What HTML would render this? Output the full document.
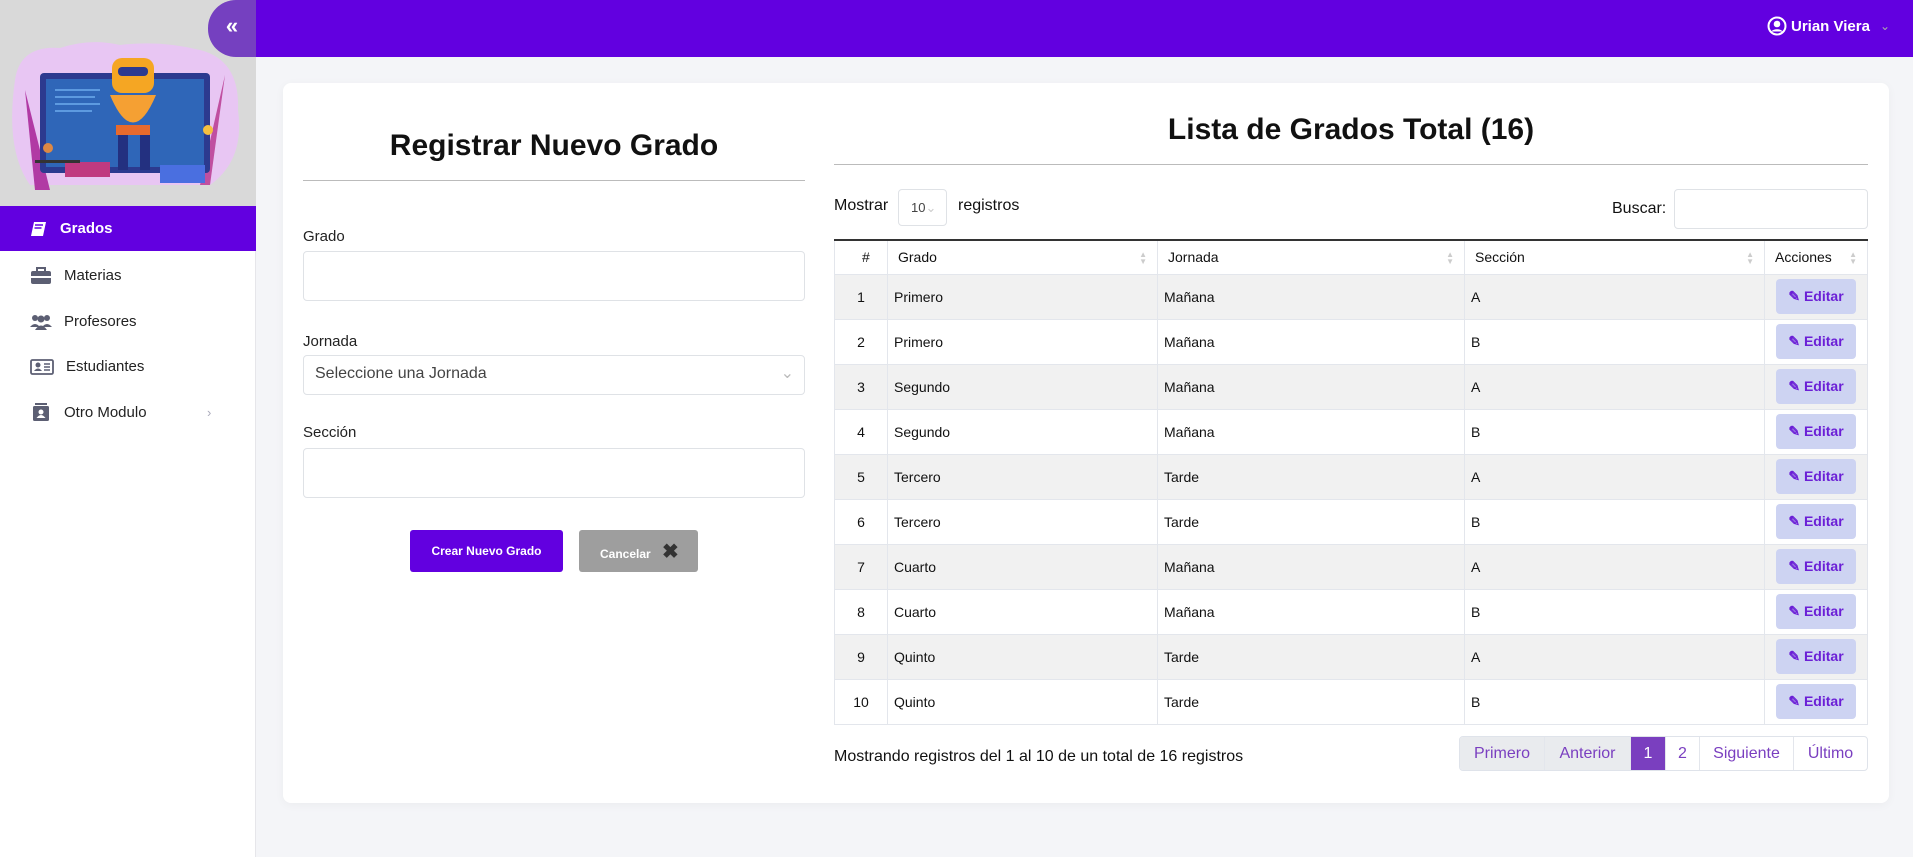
<!DOCTYPE html>
<html><head><meta charset="utf-8"><style>
*{box-sizing:border-box;margin:0;padding:0}
body{width:1913px;height:857px;background:#f4f5f8;font-family:"Liberation Sans",sans-serif;position:relative;overflow:hidden;color:#111}
.a{position:absolute}
.top{left:256px;top:0;width:1657px;height:57px;background:#6200e0}
.side{left:0;top:0;width:256px;height:857px;background:#fff;border-right:1px solid #e6e6ea}
.img{left:0;top:0;width:256px;height:206px;background:#d9d9d9}
.coll{left:208px;top:0;width:48px;height:57px;background:#7540c0;border-top-left-radius:28px;border-bottom-left-radius:28px;color:#fff;font-size:22px;font-weight:bold;text-align:center;line-height:52px}
.nav{left:0;width:256px;height:45px;font-size:15px;color:#222;display:flex;align-items:center}
.nav svg{margin-left:30px;margin-right:12px}
.card{left:283px;top:83px;width:1606px;height:720px;background:#fff;border-radius:8px;box-shadow:0 2px 10px rgba(0,0,0,.04)}
label{position:absolute;font-size:15px;color:#222}
.inp{position:absolute;border:1px solid #dfe2e6;border-radius:4px;background:#fff}
table{position:absolute;left:834px;top:239px;width:1034px;border-collapse:collapse;font-size:14px}
th{height:34px;text-align:left;font-weight:normal;border-top:2px solid #333;border-left:1px solid #e3e6ec;border-right:1px solid #e3e6ec;padding-left:10px;position:relative}
td{height:45px;border:1px solid #e3e6ec;padding-left:6px}
tr:nth-child(even) td{background:#f1f1f1}
.ed{display:inline-block;width:80px;height:35px;background:#cdd3f2;border-radius:4px;color:#6b1fd6;font-weight:bold;font-size:14px;line-height:35px;text-align:center}
.arr{position:absolute;right:10px;top:10px;color:#ccc;font-size:8px;line-height:7px}
.pg{left:1459px;top:736px;width:409px;height:35px;display:flex;border:1px solid #dfe3ea;border-radius:4px;overflow:hidden;font-size:16px;color:#7a3fc0}
.pg div{padding:0 12px;line-height:33px;border-right:1px solid #e3e6ec;text-align:center}
</style></head><body>
<div class="a top"></div>
<div class="a" style="left:1767px;top:16px;color:#fff;font-weight:bold;font-size:15px;display:flex;align-items:center">
<svg width="20" height="20" viewBox="0 0 20 20"><circle cx="10" cy="10" r="8.5" fill="none" stroke="#fff" stroke-width="2"/><circle cx="10" cy="8" r="3.3" fill="#fff"/><path d="M4.5 15.5c1.5-3 9.5-3 11 0" fill="#fff"/></svg>
<span style="margin-left:4px">Urian Viera</span><span style="margin-left:10px;color:#aaa;font-weight:normal;font-size:12px">&#8964;</span></div>
<div class="a side"></div>
<div class="a img">
<svg width="256" height="206" viewBox="0 0 256 206">
<path d="M15 80 Q20 45 60 48 Q90 38 120 45 Q160 40 200 50 Q240 60 238 110 Q245 160 210 185 L30 185 Q5 150 15 80Z" fill="#e8c6f3"/>
<path d="M25 90 L35 190 L50 190 Z" fill="#b13aa4"/><path d="M225 75 L210 185 L200 185Z" fill="#c04fa0"/>
<rect x="40" y="73" width="170" height="100" rx="4" fill="#2c3a8f"/>
<rect x="46" y="79" width="158" height="88" fill="#2f66b8"/>
<g stroke="#5d9ae0" stroke-width="2"><line x1="55" y1="90" x2="100" y2="90"/><line x1="55" y1="97" x2="95" y2="97"/><line x1="55" y1="104" x2="100" y2="104"/><line x1="55" y1="111" x2="92" y2="111"/></g>
<rect x="112" y="58" width="42" height="35" rx="10" fill="#f5a623"/><rect x="118" y="67" width="30" height="9" rx="4" fill="#2c3a8f"/>
<path d="M110 95 Q133 150 156 95Z" fill="#f5a033"/><rect x="116" y="125" width="34" height="10" fill="#e86a2c"/>
<rect x="118" y="135" width="10" height="35" fill="#233080"/><rect x="140" y="135" width="10" height="35" fill="#233080"/>
<rect x="160" y="165" width="45" height="18" fill="#4a6fe0"/><rect x="65" y="162" width="45" height="15" fill="#c03a80"/>
<rect x="35" y="160" width="45" height="3" fill="#333"/>
<circle cx="48" cy="148" r="5" fill="#d84"/><circle cx="208" cy="130" r="5" fill="#f5c040"/>
</svg></div>
<div class="a coll">&laquo;</div>
<div class="a nav" style="top:206px;background:#6200e0;color:#fff;font-weight:bold">
<svg width="18" height="18" viewBox="0 0 18 18"><path d="M4 2h12l-3 14H1z" fill="#fff"/><path d="M5 5h8M4.5 8h7" stroke="#6200e0" stroke-width="1.5"/></svg>Grados</div>
<div class="a nav" style="top:253px"><svg width="22" height="18" viewBox="0 0 22 18"><rect x="1" y="4" width="20" height="13" rx="2" fill="#5c5f73"/><rect x="7" y="1" width="8" height="4" fill="none" stroke="#5c5f73" stroke-width="2"/><rect x="1" y="9" width="20" height="2" fill="#fff"/></svg>Materias</div>
<div class="a nav" style="top:299px"><svg width="22" height="18" viewBox="0 0 22 18"><circle cx="5" cy="5" r="3" fill="#5c5f73"/><circle cx="17" cy="5" r="3" fill="#5c5f73"/><circle cx="11" cy="6" r="3.5" fill="#5c5f73"/><path d="M0 14q5-6 10 0zM12 14q5-6 10 0zM5 17q6-9 12 0z" fill="#5c5f73"/></svg>Profesores</div>
<div class="a nav" style="top:344px"><svg width="24" height="18" viewBox="0 0 24 18"><rect x="1" y="2" width="22" height="14" rx="1.5" fill="none" stroke="#5c5f73" stroke-width="1.8"/><circle cx="8" cy="7" r="2.5" fill="#5c5f73"/><path d="M4 13q4-5 8 0z" fill="#5c5f73"/><path d="M14 6h6M14 9h6M14 12h6" stroke="#5c5f73" stroke-width="1.5"/></svg>Estudiantes</div>
<div class="a nav" style="top:390px"><svg width="22" height="20" viewBox="0 0 22 20"><rect x="3" y="3" width="16" height="15" rx="1.5" fill="#5c5f73"/><rect x="5" y="0" width="12" height="2" fill="#5c5f73"/><circle cx="11" cy="9" r="2.5" fill="#fff"/><path d="M6.5 15q4.5-6 9 0z" fill="#fff"/></svg>Otro Modulo<span style="position:absolute;left:207px;color:#aab;font-size:13px">&rsaquo;</span></div>

<div class="a card"></div>
<div class="a" style="left:303px;top:129px;width:502px;text-align:center;font-size:30px;font-weight:bold;color:#111">Registrar Nuevo Grado</div>
<div class="a" style="left:303px;top:180px;width:502px;height:1px;background:#bbb"></div>
<label style="left:303px;top:228px">Grado</label>
<div class="inp" style="left:303px;top:251px;width:502px;height:50px"></div>
<label style="left:303px;top:333px">Jornada</label>
<div class="inp" style="left:303px;top:355px;width:502px;height:40px;font-size:16px;color:#444;padding:9px 11px">Seleccione una Jornada<span style="position:absolute;right:10px;top:7px;color:#bbb">&#8964;</span></div>
<label style="left:303px;top:424px">Sección</label>
<div class="inp" style="left:303px;top:448px;width:502px;height:50px"></div>
<div class="a" style="left:410px;top:530px;width:153px;height:42px;background:#6200e0;border-radius:3px;color:#fff;font-size:12px;font-weight:bold;text-align:center;line-height:42px">Crear Nuevo Grado</div>
<div class="a" style="left:579px;top:530px;width:119px;height:42px;background:#9e9e9e;border-radius:3px;color:#fff;font-size:12px;font-weight:bold;line-height:44px;padding-left:21px">Cancelar <span style="color:#333;font-size:20px;margin-left:8px">&#10006;</span></div>

<div class="a" style="left:834px;top:113px;width:1034px;text-align:center;font-size:30px;font-weight:bold">Lista de Grados Total (16)</div>
<div class="a" style="left:834px;top:164px;width:1034px;height:1px;background:#bbb"></div>
<div class="a" style="left:834px;top:197px;font-size:16px">Mostrar</div>
<div class="inp" style="left:898px;top:189px;width:49px;height:37px;font-size:13px;color:#444;padding:10px 12px">10<span style="color:#ccc">&#8964;</span></div>
<div class="a" style="left:958px;top:197px;font-size:16px">registros</div>
<div class="a" style="left:1612px;top:200px;font-size:16px">Buscar:</div>
<div class="inp" style="left:1674px;top:189px;width:194px;height:40px"></div>
<table>
<tr><th style="width:53px;padding-left:27px">#</th><th style="width:270px">Grado<span class="arr">▲<br>▼</span></th><th style="width:307px">Jornada<span class="arr">▲<br>▼</span></th><th style="width:300px">Sección<span class="arr">▲<br>▼</span></th><th style="padding-left:10px">Acciones<span class="arr">▲<br>▼</span></th></tr>
<tr><td style="text-align:center;padding:0">1</td><td>Primero</td><td>Mañana</td><td>A</td><td style="padding-left:11px"><span class="ed">&#9998; Editar</span></td></tr>
<tr><td style="text-align:center;padding:0">2</td><td>Primero</td><td>Mañana</td><td>B</td><td style="padding-left:11px"><span class="ed">&#9998; Editar</span></td></tr>
<tr><td style="text-align:center;padding:0">3</td><td>Segundo</td><td>Mañana</td><td>A</td><td style="padding-left:11px"><span class="ed">&#9998; Editar</span></td></tr>
<tr><td style="text-align:center;padding:0">4</td><td>Segundo</td><td>Mañana</td><td>B</td><td style="padding-left:11px"><span class="ed">&#9998; Editar</span></td></tr>
<tr><td style="text-align:center;padding:0">5</td><td>Tercero</td><td>Tarde</td><td>A</td><td style="padding-left:11px"><span class="ed">&#9998; Editar</span></td></tr>
<tr><td style="text-align:center;padding:0">6</td><td>Tercero</td><td>Tarde</td><td>B</td><td style="padding-left:11px"><span class="ed">&#9998; Editar</span></td></tr>
<tr><td style="text-align:center;padding:0">7</td><td>Cuarto</td><td>Mañana</td><td>A</td><td style="padding-left:11px"><span class="ed">&#9998; Editar</span></td></tr>
<tr><td style="text-align:center;padding:0">8</td><td>Cuarto</td><td>Mañana</td><td>B</td><td style="padding-left:11px"><span class="ed">&#9998; Editar</span></td></tr>
<tr><td style="text-align:center;padding:0">9</td><td>Quinto</td><td>Tarde</td><td>A</td><td style="padding-left:11px"><span class="ed">&#9998; Editar</span></td></tr>
<tr><td style="text-align:center;padding:0">10</td><td>Quinto</td><td>Tarde</td><td>B</td><td style="padding-left:11px"><span class="ed">&#9998; Editar</span></td></tr>
</table>
<div class="a" style="left:834px;top:748px;font-size:16px">Mostrando registros del 1 al 10 de un total de 16 registros</div>
<div class="a pg"><div style="background:#e9ebee;width:85px">Primero</div><div style="background:#e9ebee;width:86px">Anterior</div><div style="background:#7a3fbf;color:#fff;width:35px;padding:0">1</div><div style="width:34px;padding:0">2</div><div style="width:94px">Siguiente</div><div style="border:0;flex:1">Último</div></div>
</body></html>
